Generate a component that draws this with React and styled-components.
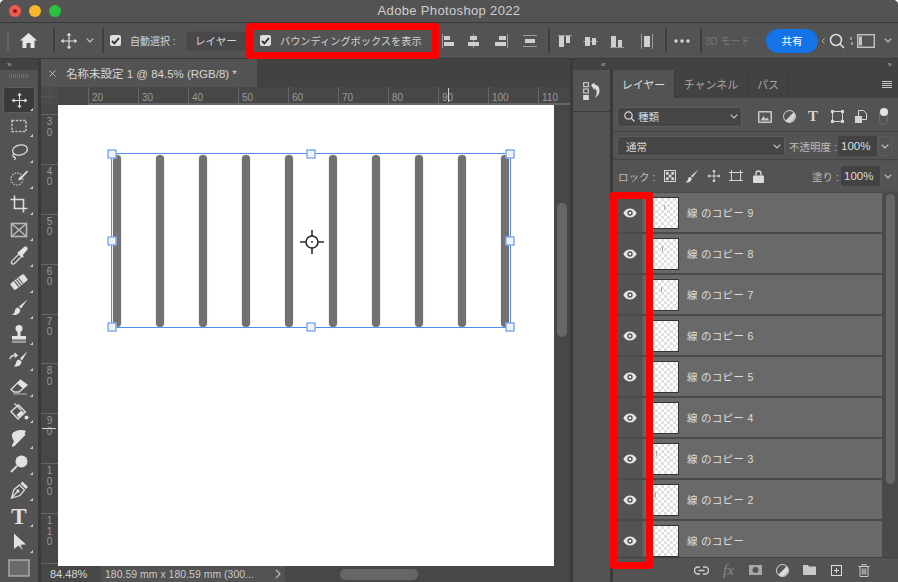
import React from 'react'
import styled, { createGlobalStyle } from 'styled-components'

const GlobalStyle = createGlobalStyle`
html, body {
  margin: 0;
  padding: 0;
  background: #ffffff;
}
* {
  box-sizing: border-box;
}
`

const Window = styled.div`
position: relative;
width: 898px;
height: 582px;
overflow: hidden;
display: flex;
flex-direction: column;
background: #3a3a3a;
border-radius: 5px 5px 0 0;
color: #d8d8d8;
font-family: "Liberation Sans", "Noto Sans CJK JP", sans-serif;
font-size: 10px;
`

const TitleBar = styled.header`
position: relative;
flex: 0 0 23px;
display: flex;
align-items: center;
justify-content: center;
background: #535353;
border-bottom: 1px solid #383838;
font-size: 13px;
color: #cfcfcf;
letter-spacing: 0.35px;
padding-bottom: 1px;
`

const Lights = styled.div`
position: absolute;
left: 9px;
top: 5px;
display: flex;
gap: 8px;
`

const Light = styled.span`
width: 12px;
height: 12px;
border-radius: 50%;
background: ${(props) => props.$color};
display: flex;
align-items: center;
justify-content: center;

&::after {
  content: "";
  width: 4px;
  height: 4px;
  border-radius: 50%;
  background: ${(props) => props.$dot || 'transparent'};
}
`

const OptionsBar = styled.div`
flex: 0 0 36px;
display: flex;
align-items: center;
background: #535353;
border-bottom: 1px solid #383838;
`

const Slot = styled.div`
flex: 0 0 ${(props) => props.$w}px;
margin-left: ${(props) => props.$ml || 0}px;
display: flex;
align-items: center;
justify-content: center;
`

const BarSep = styled.div`
flex: 0 0 2px;
height: 25px;
margin-left: ${(props) => props.$ml || 0}px;
background: #3e3e3e;
`

const Grip = styled.div`
width: 2px;
height: 22px;
margin-left: 3px;
background: repeating-linear-gradient(to bottom, #6e6e6e 0 1px, transparent 1px 2px);
`

const Check = styled.span`
flex: 0 0 11px;
width: 11px;
height: 11px;
margin-left: ${(props) => props.$ml || 0}px;
border-radius: 2px;
background: #dedede;
display: flex;
align-items: center;
justify-content: center;
`

const OptLabel = styled.span`
flex: 0 0 ${(props) => props.$w}px;
margin-left: ${(props) => props.$ml || 0}px;
color: ${(props) => props.$dim ? '#7a7a7a' : '#d4d4d4'};
font-size: ${(props) => props.$size || 10}px;
white-space: nowrap;
`

const ToolDropdown = styled.div`
flex: 0 0 61px;
height: 20px;
margin-left: 8px;
padding-left: 8px;
display: flex;
align-items: center;
border-radius: 3px;
background: #484848;
border: 1px solid #4d4d4d;
font-size: 10.5px;
color: #d8d8d8;
white-space: nowrap;
`

const ShareButton = styled.button`
flex: 0 0 52px;
height: 24px;
margin-left: 3px;
padding: 0;
border: 0;
border-radius: 12px;
background: #1473e6;
color: #ffffff;
font: inherit;
font-size: 10.5px;
`

const Workspace = styled.div`
flex: 1;
display: flex;
min-height: 0;
gap: 3px;
`

const ToolColumn = styled.nav`
flex: 0 0 38px;
display: flex;
flex-direction: column;
background: #535353;
`

const CollapseStrip = styled.div`
flex: 0 0 11px;
display: flex;
align-items: center;
justify-content: space-between;
padding: 0 7px;
background: #424242;
color: #b5b5b5;
font-size: 8px;
letter-spacing: -1px;
line-height: 1;
`

const GripRow = styled.div`
flex: 0 0 17px;
display: flex;
justify-content: center;
padding-top: 4px;

&::after {
  content: "";
  width: 20px;
  height: 4px;
  background: repeating-linear-gradient(to right, #6e6e6e 0 1px, transparent 1px 2px);
}
`

const ToolButton = styled.div`
position: relative;
flex: 0 0 26px;
margin: 0 3px;
display: flex;
align-items: center;
justify-content: center;
border-radius: 3px;
background: ${(props) => props.$active ? '#3a3a3a' : 'transparent'};
border: 1px solid ${(props) => props.$active ? '#5e5e5e' : 'transparent'};

&::after {
  content: "";
  position: absolute;
  right: 1px;
  bottom: 1px;
  display: ${(props) => props.$plain ? 'none' : 'block'};
  border-style: solid;
  border-width: 0 0 3px 3px;
  border-color: transparent transparent #d0d0d0 transparent;
}
`

const ToolType = styled.span`
font-family: "Liberation Serif", serif;
font-weight: 700;
font-size: ${(props) => props.$size || 21}px;
line-height: 1;
color: ${(props) => props.$color || '#e0e0e0'};
`

const DocArea = styled.main`
flex: 0 0 529px;
display: flex;
flex-direction: column;
min-width: 0;
`

const TabBar = styled.div`
flex: 0 0 28px;
display: flex;
background: #424242;
`

const DocTab = styled.div`
flex: 0 0 216px;
display: flex;
align-items: center;
gap: 10px;
padding-left: 8px;
background: #535353;
color: #d6d6d6;
font-size: 11.5px;
white-space: nowrap;
`

const RulerTop = styled.div`
position: relative;
flex: 0 0 18px;
display: flex;
background: #474747;
overflow: hidden;
`

const RulerCorner = styled.div`
flex: 0 0 17px;
background:
  linear-gradient(#535353, #535353) center / 100% 1px no-repeat,
  linear-gradient(#535353, #535353) center / 1px 100% no-repeat,
  #4b4b4b;
`

const RulerGap = styled.div`
flex: 0 0 30px;
`

const RulerCell = styled.div`
flex: 0 0 50px;
padding: 5px 0 0 3px;
border-left: 1px solid #666666;
color: #999999;
font-size: 10px;
line-height: 11px;
background: linear-gradient(#666666, #666666) left 0 bottom 0 / 1px 2px;
background-size: 10px 2px;
background-position: -1px bottom;
background-repeat: repeat-x;
`

const RulerMarkTop = styled.span`
position: absolute;
left: 407px;
top: 1px;
width: 1px;
height: 14px;
background: #d0d0d0;
`

const DocMiddle = styled.div`
flex: 1;
display: flex;
min-height: 0;
background: #474747;
`

const RulerLeft = styled.div`
position: relative;
flex: 0 0 17px;
padding-top: 9px;
background: #474747;
overflow: hidden;
`

const RulerRow = styled.div`
height: 49.9px;
padding: 2px 0 0 0;
border-top: 1px solid #666666;
display: flex;
flex-direction: column;
align-items: center;
color: #999999;
font-size: 10px;
line-height: 10.5px;
`

const RulerMarkLeft = styled.span`
position: absolute;
left: 1px;
top: 323px;
width: 14px;
height: 1px;
background: #d0d0d0;
`

const Paper = styled.div`
position: relative;
flex: 0 0 496px;
background: #ffffff;
`

const BoundingBox = styled.div`
position: absolute;
left: 53px;
top: 48px;
width: 400px;
height: 175px;
padding: 1px 1px 0;
display: flex;
justify-content: space-between;
border: 1px solid #4f8bf0;
`

const LineBar = styled.span`
width: 8px;
height: 172px;
border-radius: 4px;
background: #717171;
box-shadow: 0 0 1.5px #a8a8a8;
`

const Handle = styled.span`
position: absolute;
left: ${(props) => props.$x}%;
top: ${(props) => props.$y}%;
width: 9px;
height: 9px;
transform: translate(-50%, -50%);
background: #f2f2f2;
border: 1px solid #4f8bf0;
`

const Pivot = styled.svg`
position: absolute;
left: 242px;
top: 125px;
`

const VScrollTrack = styled.div`
flex: 0 0 16px;
padding: 98px 3px 0;
background: #474747;
`

const ScrollThumb = styled.div`
width: ${(props) => props.$w || '100%'};
height: ${(props) => props.$h};
margin-left: ${(props) => props.$ml || 0}px;
border-radius: 5px;
background: #666666;
`

const StatusBar = styled.footer`
flex: 0 0 16px;
display: flex;
align-items: center;
background: #474747;
font-size: 11px;
color: #d8d8d8;
white-space: nowrap;
`

const Zoom = styled.span`
flex: 0 0 60px;
padding-left: 9px;
`

const DocInfo = styled.div`
flex: 0 0 184px;
height: 16px;
display: flex;
align-items: center;
justify-content: space-between;
padding: 0 4px;
background: #535353;
color: #c8c8c8;
font-size: 10.5px;
`

const RightArea = styled.aside`
flex: 1;
display: flex;
flex-direction: column;
min-width: 0;
`

const RightBody = styled.div`
flex: 1;
display: flex;
gap: 3px;
min-height: 0;
`

const Dock = styled.div`
flex: 0 0 37px;
display: flex;
flex-direction: column;
background: #535353;
`

const DockItem = styled.div`
flex: 0 0 42px;
display: flex;
align-items: flex-start;
justify-content: center;
border-bottom: 1px solid #3a3a3a;
`

const LayersPanel = styled.section`
flex: 1;
display: flex;
flex-direction: column;
min-width: 0;
background: #535353;
`

const PanelTabs = styled.div`
flex: 0 0 28px;
display: flex;
align-items: stretch;
background: #424242;
`

const PanelTab = styled.div`
flex: 0 0 ${(props) => props.$w}px;
display: flex;
align-items: center;
justify-content: center;
background: ${(props) => props.$active ? '#535353' : 'transparent'};
border-right: 1px solid #383838;
color: ${(props) => props.$active ? '#dcdcdc' : '#a8a8a8'};
font-size: 11px;
`

const PanelMenu = styled.div`
margin-left: auto;
margin-right: 6px;
align-self: center;
width: 10px;
height: 7px;
background: repeating-linear-gradient(to bottom, #c8c8c8 0 1px, transparent 1px 2px);
`

const ControlRow = styled.div`
flex: 0 0 ${(props) => props.$h}px;
display: flex;
align-items: center;
padding: ${(props) => props.$pt || 0}px 0 0 4px;
border-bottom: ${(props) => props.$line ? '1px solid #444444' : '0'};
`

const Select = styled.div`
flex: 0 0 ${(props) => props.$w}px;
height: 20px;
display: flex;
align-items: center;
justify-content: space-between;
gap: 3px;
padding: 0 3px 0 ${(props) => props.$pl || 8}px;
border: 1px solid #5c5c5c;
border-radius: 3px;
background: #454545;
color: #d8d8d8;
font-size: 10.5px;
`

const SelectLabel = styled.span`
flex: 1;
`

const FilterToggle = styled.div`
flex: 0 0 9px;
height: 16px;
margin-left: 6px;
border-radius: 5px;
border: 1px solid #6d6d6d;
position: relative;

&::before {
  content: "";
  position: absolute;
  left: 0;
  top: -2px;
  width: 8px;
  height: 8px;
  border-radius: 50%;
  background: #e4e4e4;
}
`

const FieldLabel = styled.span`
flex: 0 0 ${(props) => props.$w}px;
margin-left: ${(props) => props.$ml || 0}px;
color: #bdbdbd;
font-size: 10.5px;
white-space: nowrap;
`

const Field = styled.div`
flex: 0 0 39px;
height: 20px;
margin-left: ${(props) => props.$ml || 0}px;
display: flex;
align-items: center;
padding-left: 3px;
border-radius: 3px 0 0 3px;
background: #424242;
color: #dddddd;
font-size: 11.5px;
`

const FieldArrow = styled.div`
flex: 0 0 14px;
height: 20px;
margin-left: 1px;
display: flex;
align-items: center;
justify-content: center;
border-radius: 0 3px 3px 0;
border: 1px solid #5c5c5c;
`

const ListWrap = styled.div`
flex: 1;
display: flex;
min-height: 0;
`

const LayerList = styled.div`
flex: 0 0 269px;
display: flex;
flex-direction: column;
gap: 2px;
padding: 1px 0 0 4px;
overflow: hidden;
background: #4a4a4a;
`

const LayerRow = styled.div`
flex: 0 0 39px;
display: flex;
align-items: center;
background: #696969;
`

const EyeCell = styled.div`
flex: 0 0 27px;
align-self: stretch;
display: flex;
align-items: center;
justify-content: center;
background: #535353;
border-right: 2px solid #5e5e5e;
`

const Thumb = styled.div`
position: relative;
flex: 0 0 27px;
height: 32px;
margin-left: 8px;
border-top: 1px solid #333333;
border-right: 1px solid #333333;
border-bottom: 1px solid #333333;
background: repeating-conic-gradient(#e0e0e0 0 25%, #ffffff 0 50%) 0 0 / 6px 6px;

&::after {
  content: "";
  position: absolute;
  left: ${(props) => props.$mark}px;
  top: 7px;
  width: 1px;
  height: ${(props) => props.$mark ? 5 : 0}px;
  background: #a8a8a8;
}
`

const LayerName = styled.span`
margin-left: 8px;
color: #dedede;
font-size: 10.5px;
letter-spacing: 0.3px;
white-space: nowrap;
`

const ListScroll = styled.div`
flex: 1;
padding: 2px 3px 0 4px;
background: #4a4a4a;
`

const PanelFooter = styled.div`
flex: 0 0 25px;
display: flex;
align-items: center;
padding-left: 75px;
gap: 0;
border-top: 1px solid #404040;
background: #535353;
`

const FooterSlot = styled.div`
flex: 0 0 ${(props) => props.$w || 27}px;
display: flex;
align-items: center;
justify-content: center;
`

const FxMark = styled.span`
font-family: "Liberation Serif", serif;
font-style: italic;
font-size: 15px;
color: #8a8a8a;
`

// red annotation frames painted over the screenshot
const RedFrame = styled.div`
position: absolute;
left: ${(props) => props.$x}px;
top: ${(props) => props.$y}px;
width: ${(props) => props.$w}px;
height: ${(props) => props.$h}px;
border: 7px solid #ff0000;
border-radius: 3px;
pointer-events: none;
`

const Ico = ({ children, w = 20, h = 20, vb = '0 0 20 20' }) => (
  <svg width={w} height={h} viewBox={vb} fill="none" stroke="#dcdcdc" strokeWidth="1.3">{children}</svg>
)

const Chevron = ({ color = '#c8c8c8' }) => (
  <svg width="8" height="5" viewBox="0 0 8 5" fill="none" stroke={color} strokeWidth="1.1"><path d="M0.7 0.7 4 4 7.3 0.7" /></svg>
)

const MoveIcon = ({ size = 18 }) => (
  <svg width={size} height={size} viewBox="0 0 20 20" fill="#e2e2e2" stroke="#e2e2e2" strokeWidth="1.2">
    <path d="M10 2v16M2 10h16" />
    <path d="M10 0.8 12.6 4H7.4ZM10 19.2 7.4 16h5.2ZM0.8 10 4 7.4v5.2ZM19.2 10 16 12.6V7.4Z" stroke="none" />
  </svg>
)

const CheckMark = () => (
  <svg width="9" height="8" viewBox="0 0 9 8" fill="none" stroke="#2d2d2d" strokeWidth="1.8"><path d="M1 4 3.4 6.4 8 1" /></svg>
)

const AlignIcon = ({ rects, line }) => (
  <svg width="18" height="16" viewBox="0 0 18 16" fill="#cfcfcf">
    {line.map((d) => <rect key={d.join()} x={d[0]} y={d[1]} width={d[2]} height={d[3]} fill="#9c9c9c" />)}
    {rects.map((d) => <rect key={d.join()} x={d[0]} y={d[1]} width={d[2]} height={d[3]} />)}
  </svg>
)

const TOOLS = [
  { key: 'move', active: true, node: <MoveIcon size={17} /> },
  { key: 'marquee', node: <Ico><rect x="3" y="4.5" width="14" height="11" strokeDasharray="2.4 1.3" stroke="#c4c4c4" strokeWidth="1.5" /></Ico> },
  { key: 'lasso', node: <Ico><ellipse cx="11" cy="8" rx="7.5" ry="5" transform="rotate(-12 11 8)" /><path d="M5 12c-1.6 1-1.5 3 .2 3 1.4 0 1.3 2 .3 3" /></Ico> },
  { key: 'quick', node: <Ico><circle cx="8" cy="11" r="6" strokeDasharray="1.5 1.3" stroke="#bdbdbd" /><path d="M18 2.5 12 8.5c-1.6.3-2.6 1.6-2.6 3.8 2.3 0 3.6-1 4-2.6L19 3.8Z" fill="#e2e2e2" stroke="none" /></Ico> },
  { key: 'crop', node: <Ico><path d="M1.5 5.5H14.5V18.5M5.5 1.5V14.5H18.5" strokeWidth="1.6" /></Ico> },
  { key: 'frame', node: <Ico><rect x="2.5" y="3.5" width="15" height="13" stroke="#b8b8b8" strokeWidth="1.6" /><path d="M2.5 3.5 17.5 16.5M17.5 3.5 2.5 16.5" stroke="#b8b8b8" strokeWidth="1.6" /></Ico> },
  { key: 'dropper', node: <Ico><path d="M3 17.5c-.9-.9-.6-2 0-2.6L10 8l2.5 2.5-7 7c-.7.6-1.7.9-2.5 0Z" /><path d="M10.2 5.3 15 .9c1-.8 2.5-.5 3.2.4.7 1 .6 2.2-.2 3l-4.200 4.800 1 1.400-1.500 1.300-5-5 1.400-1.400Z" fill="#e2e2e2" stroke="none" /></Ico> },
  { key: 'heal', node: <Ico><g transform="rotate(-38 10 10)"><rect x="1.500" y="6" width="17" height="8" rx="1.500" fill="#e0e0e0" stroke="none" /><path d="M7 6.500v7M9.500 6.500v7M12 6.500v7" stroke="#555555" strokeWidth="1.100" /></g></Ico> },
  { key: 'brush', node: <Ico><path d="M18.500 1.500 10 8.500 12 10.500ZM9 9.500c-2.500.4-3 2.200-3.200 3.800-.2 1.400-1 2.600-2.800 3.400 3.500 1 8-.3 8.300-5Z" fill="#e2e2e2" stroke="none" /></Ico> },
  { key: 'stamp', node: <Ico><circle cx="10" cy="4.500" r="3.500" fill="#e2e2e2" stroke="none" /><path d="M8.500 7h3v5h-3ZM3 12h14v3.500H3Z" fill="#e2e2e2" stroke="none" /><rect x="3" y="16.500" width="14" height="2.500" fill="#9a9a9a" stroke="none" /></Ico> },
  { key: 'history', node: <Ico><path d="M18.500 1 11 8.500 13 10.500ZM10 9.500c-2.500.4-2.500 2-3 3.500-.3 1.300-1 2.400-2 3.400 3 .5 7.500-.6 7.500-4.900Z" fill="#e2e2e2" stroke="none" /><path d="M1 9c.8-2.800 3.200-4 6-3.600M5.500 3 8 5.500 5.500 7.500" strokeWidth="1.500" /></Ico> },
  { key: 'eraser', node: <Ico><path d="M2 13.500 11.500 4l6.500 5-8 7H5Z" /><path d="M8 7.500 11.500 4l6.500 5-4 3.500Z" fill="#e2e2e2" stroke="none" /><path d="M4 18h14" strokeWidth="1.200" stroke="#a8a8a8" /></Ico> },
  { key: 'bucket', node: <Ico><path d="M2 9.500 9.500 3l7 7-7.500 7Z" strokeWidth="1.400" /><path d="M5.500 1.500 12 8" /><path d="M12.500 8.500 15 10.500l-5 5-2.500-2.500Z" fill="#e2e2e2" stroke="none" /><circle cx="17.500" cy="15.500" r="2" fill="#e2e2e2" stroke="none" /></Ico> },
  { key: 'smudge', node: <Ico><path d="M3 6c2-3.500 9-5 13-3.500 1.500.8.500 2.500-1 2.500 1.500.5 2 2 .5 2.800L10 13.500 5 18.500H2.500L5 13c-1.500-2-2.500-4.500-2-7Z" fill="#e2e2e2" stroke="none" /></Ico> },
  { key: 'dodge', node: <Ico><circle cx="12.500" cy="7.500" r="6" fill="#e2e2e2" stroke="none" /><path d="M8 12 2 18" strokeWidth="1.800" /></Ico> },
  { key: 'pen', node: <Ico><path d="M2.500 18 5 9.500 10.500 5l5 5-4.500 5.500Z" /><path d="M2.500 18 8.500 11.500" /><circle cx="9" cy="11" r="1" fill="#dcdcdc" /><path d="M11.500 3.500 13.500 1.500l5.500 5.500-2 2Z" fill="#e2e2e2" stroke="none" /></Ico> },
  { key: 'type', node: <ToolType $size={23}>T</ToolType> },
  { key: 'select', node: <Ico><path d="M5 1.500 17 12.500 11.500 12.800 14 18.500l-4.500-5L5 17Z" fill="#e2e2e2" stroke="none" /></Ico> },
  { key: 'rect', plain: true, node: <Ico w={22} h={18} vb="0 0 22 18"><rect x="1" y="1" width="20" height="16" fill="#6a6a6a" stroke="#b4b4b4" strokeWidth="1.300" /></Ico> },
]

const TOP_TICKS = [20, 30, 40, 50, 60, 70, 80, 90, 100, 110]
const LEFT_TICKS = [30, 40, 50, 60, 70, 80, 90, 100, 110]
const BARS = Array.from({ length: 10 }, (_, i) => i)
const HANDLES = [[0, 0], [50, 0], [100, 0], [0, 50], [100, 50], [0, 100], [50, 100], [100, 100]]

const LAYERS = [
  { name: '線 のコピー 9', mark: 12 },
  { name: '線 のコピー 8', mark: 10 },
  { name: '線 のコピー 7', mark: 9 },
  { name: '線 のコピー 6', mark: 0 },
  { name: '線 のコピー 5', mark: 0 },
  { name: '線 のコピー 4', mark: 0 },
  { name: '線 のコピー 3', mark: 4 },
  { name: '線 のコピー 2', mark: 3 },
  { name: '線 のコピー', mark: 0 },
]

const Eye = () => (
  <svg width="14" height="10" viewBox="0 0 14 10">
    <path d="M0.300 5C2 1.800 4.400 .4 7 .4s5 1.400 6.700 4.600C12 8.200 9.600 9.600 7 9.600S2 8.200 .3 5Z" fill="#e6e6e6" />
    <circle cx="7" cy="5" r="2.700" fill="#535353" />
    <circle cx="7" cy="5" r="1.300" fill="#e6e6e6" />
  </svg>
)

export default function App() {
  return (
    <Window>
      <GlobalStyle />
      <TitleBar>
        <Lights>
          <Light $color="#ee5a52" $dot="#8a1f1a" />
          <Light $color="#f5b82e" />
          <Light $color="#29c13f" />
        </Lights>
        Adobe Photoshop 2022
      </TitleBar>

      <OptionsBar>
        <Slot $w={12}><Grip /></Slot>
        <Slot $w={32}>
          <svg width="17" height="15" viewBox="0 0 17 15" fill="#e6e6e6"><path d="M8.500 0 17 7.500h-2.500V15h-4v-5h-4v5h-4V7.500H0Z" /></svg>
        </Slot>
        <BarSep $ml={9} />
        <Slot $w={28}><MoveIcon /></Slot>
        <Slot $w={14}><Chevron /></Slot>
        <BarSep $ml={5} />
        <Check $ml={6}><CheckMark /></Check>
        <OptLabel $w={48} $ml={9}>自動選択 :</OptLabel>
        <ToolDropdown>レイヤー</ToolDropdown>
        <Check $ml={13}><CheckMark /></Check>
        <OptLabel $w={142} $ml={9} $size={10.2}>バウンディングボックスを表示</OptLabel>
        <Slot $w={24} $ml={15}><AlignIcon line={[[2, 1, 1, 14]]} rects={[[4, 3, 6, 4], [4, 9, 10, 4]]} /></Slot>
        <Slot $w={24} $ml={1}><AlignIcon line={[[8, 1, 1, 14]]} rects={[[5, 3, 7, 4], [3, 9, 11, 4]]} /></Slot>
        <Slot $w={24} $ml={3}><AlignIcon line={[[15, 1, 1, 14]]} rects={[[7, 3, 7, 4], [3, 9, 11, 4]]} /></Slot>
        <Slot $w={24} $ml={5}><AlignIcon line={[[2, 2, 14, 1], [2, 13, 14, 1]]} rects={[[4, 6, 10, 4]]} /></Slot>
        <BarSep $ml={6} />
        <Slot $w={24} $ml={3}><AlignIcon line={[[2, 2, 14, 1]]} rects={[[3, 3, 5, 11], [10, 3, 4, 7]]} /></Slot>
        <Slot $w={24} $ml={2}><AlignIcon line={[[1, 8, 15, 1]]} rects={[[3, 4, 5, 9], [10, 5, 4, 7]]} /></Slot>
        <Slot $w={24} $ml={2}><AlignIcon line={[[2, 14, 14, 1]]} rects={[[3, 3, 5, 11], [10, 7, 4, 7]]} /></Slot>
        <Slot $w={24} $ml={6}><AlignIcon line={[[3, 1, 1, 15], [14, 1, 1, 15]]} rects={[[6, 3, 6, 11]]} /></Slot>
        <BarSep $ml={6} />
        <Slot $w={24} $ml={3}>
          <svg width="16" height="4" viewBox="0 0 16 4" fill="#d6d6d6"><circle cx="2" cy="2" r="1.700" /><circle cx="8" cy="2" r="1.700" /><circle cx="14" cy="2" r="1.700" /></svg>
        </Slot>
        <BarSep $ml={6} />
        <OptLabel $w={58} $ml={3} $dim>3D モード :</OptLabel>
        <ShareButton>共有</ShareButton>
        <Slot $w={10}><svg width="4" height="6" viewBox="0 0 4 6" fill="none" stroke="#b0b0b0"><path d="M3.500 .5 1 3l2.500 2.500" /></svg></Slot>
        <Slot $w={18}>
          <svg width="16" height="16" viewBox="0 0 16 16" fill="none" stroke="#e0e0e0" strokeWidth="1.500"><circle cx="7" cy="7" r="5.500" /><path d="M11 11 15 15" /></svg>
        </Slot>
        <Slot $w={10}><svg width="4" height="8" viewBox="0 0 4 8" fill="#9a9a9a"><rect x="1" y="0" width="2" height="3" /><rect x="2" y="5" width="2" height="3" /></svg></Slot>
        <Slot $w={18} $ml={1}>
          <svg width="18" height="14" viewBox="0 0 18 14" fill="none" stroke="#c4c4c4" strokeWidth="1.400"><rect x=".7" y=".7" width="16.600" height="12.600" /><rect x="2" y="2.500" width="3" height="9" fill="#c4c4c4" stroke="none" /></svg>
        </Slot>
        <Slot $w={16} $ml={5}><Chevron /></Slot>
      </OptionsBar>

      <Workspace>
        <ToolColumn>
          <CollapseStrip><span>››</span></CollapseStrip>
          <GripRow />
          {TOOLS.map((tool) => (
            <ToolButton key={tool.key} $active={tool.active} $plain={tool.plain}>{tool.node}</ToolButton>
          ))}
        </ToolColumn>

        <DocArea>
          <TabBar>
            <DocTab>
              <svg width="7" height="7" viewBox="0 0 7 7" stroke="#b8b8b8"><path d="M.5 .5 6.500 6.500M6.500 .5 .5 6.500" /></svg>
              名称未設定 1 @ 84.5% (RGB/8) *
            </DocTab>
          </TabBar>
          <RulerTop>
            <RulerCorner />
            <RulerGap />
            {TOP_TICKS.map((n) => <RulerCell key={n}>{n}</RulerCell>)}
            <RulerMarkTop />
          </RulerTop>
          <DocMiddle>
            <RulerLeft>
              {LEFT_TICKS.map((n) => (
                <RulerRow key={n}>
                  {String(n).split('').map((d, i) => <span key={`${n}-${i}`}>{d}</span>)}
                </RulerRow>
              ))}
              <RulerRow />
              <RulerMarkLeft />
            </RulerLeft>
            <Paper>
              <BoundingBox>
                {BARS.map((b) => <LineBar key={b} />)}
                {HANDLES.map(([x, y]) => <Handle key={`${x}-${y}`} $x={x} $y={y} />)}
              </BoundingBox>
              <Pivot width="24" height="24" viewBox="0 0 24 24" fill="none" stroke="#2b2b2b" strokeWidth="1.600">
                <circle cx="12" cy="12" r="6" />
                <path d="M12 0v6M12 18v6M0 12h6M18 12h6" />
                <circle cx="12" cy="12" r="1" fill="#2b2b2b" stroke="none" />
              </Pivot>
            </Paper>
            <VScrollTrack><ScrollThumb $h="134px" /></VScrollTrack>
          </DocMiddle>
          <StatusBar>
            <Zoom>84.48%</Zoom>
            <DocInfo>
              180.59 mm x 180.59 mm (300...
              <svg width="6" height="10" viewBox="0 0 6 10" fill="none" stroke="#c8c8c8" strokeWidth="1.100"><path d="M1 .8 5 5 1 9.200" /></svg>
            </DocInfo>
            <ScrollThumb $w="78px" $h="11px" $ml={55} />
          </StatusBar>
        </DocArea>

        <RightArea>
          <CollapseStrip>
            <span style={{ marginLeft: 21 }}>‹‹</span>
            <span>››</span>
          </CollapseStrip>
          <RightBody>
            <Dock>
              <DockItem>
                <svg width="17" height="18" viewBox="0 0 17 18" fill="#dcdcdc" style={{ marginTop: 12 }}>
                  <rect x=".7" y=".7" width="4.600" height="4" fill="none" stroke="#dcdcdc" />
                  <rect x=".7" y="7" width="4.600" height="4" fill="none" stroke="#dcdcdc" />
                  <rect x=".2" y="13" width="5.600" height="5" />
                  <path d="M8 3 11.500 .5V2.500c3.500.3 5 3 5 6 0 3-1.500 5.500-4.500 7.500 1.500-2.500 2-5 1.500-7-.3-1.500-1-2.500-2-2.800V8.500Z" />
                </svg>
              </DockItem>
            </Dock>
            <LayersPanel>
              <PanelTabs>
                <PanelTab $w={62} $active>レイヤー</PanelTab>
                <PanelTab $w={73}>チャンネル</PanelTab>
                <PanelTab $w={41}>パス</PanelTab>
                <PanelMenu />
              </PanelTabs>
              <ControlRow $h={34} $pt={4} $line>
                <Select $w={125} $pl={6}>
                  <svg width="11" height="11" viewBox="0 0 11 11" fill="none" stroke="#d8d8d8" strokeWidth="1.200"><circle cx="4.500" cy="4.500" r="3.700" /><path d="M7.200 7.200 10.500 10.500" /></svg>
                  <SelectLabel>種類</SelectLabel>
                  <Chevron />
                </Select>
                <Slot $w={24} $ml={11}>
                  <svg width="14" height="12" viewBox="0 0 14 12"><rect width="14" height="12" rx="1" fill="#c8c8c8" /><rect x="1.500" y="1.500" width="11" height="9" fill="#555555" /><path d="M2.500 9.500 5.500 5l2 3 1.500-1.500 2.500 3Z" fill="#c8c8c8" /></svg>
                </Slot>
                <Slot $w={24}>
                  <svg width="13" height="13" viewBox="0 0 13 13"><circle cx="6.500" cy="6.500" r="6" fill="#555555" stroke="#d4d4d4" /><path d="M10.700 2.300A6 6 0 0 1 2.300 10.700Z" fill="#d4d4d4" /></svg>
                </Slot>
                <Slot $w={24}><ToolType $size={15} $color="#d4d4d4">T</ToolType></Slot>
                <Slot $w={24}>
                  <svg width="13" height="13" viewBox="0 0 13 13" fill="#d4d4d4"><rect x="1.500" y="1.500" width="10" height="10" fill="none" stroke="#d4d4d4" /><rect width="3" height="3" /><rect x="10" width="3" height="3" /><rect y="10" width="3" height="3" /><rect x="10" y="10" width="3" height="3" /></svg>
                </Slot>
                <Slot $w={24}>
                  <svg width="12" height="13" viewBox="0 0 12 13"><path d="M3.500 .5h5l3 3v6h-8Z" fill="none" stroke="#d4d4d4" /><rect y="6" width="7" height="7" fill="#d4d4d4" /></svg>
                </Slot>
                <FilterToggle />
              </ControlRow>
              <ControlRow $h={28} $pt={1} $line>
                <Select $w={168}><SelectLabel>通常</SelectLabel><Chevron /></Select>
                <FieldLabel $w={49} $ml={4}>不透明度 :</FieldLabel>
                <Field>100%</Field>
                <FieldArrow><Chevron /></FieldArrow>
              </ControlRow>
              <ControlRow $h={32}>
                <FieldLabel $w={38} $ml={1}>ロック :</FieldLabel>
                <Slot $w={22} $ml={3}>
                  <svg width="12" height="12" viewBox="0 0 12 12" fill="#d8d8d8"><rect x=".5" y=".5" width="11" height="11" fill="#555555" stroke="#d8d8d8" /><rect x="2" y="2" width="2.700" height="2.700" /><rect x="7.300" y="2" width="2.700" height="2.700" /><rect x="4.700" y="4.700" width="2.700" height="2.700" /><rect x="2" y="7.300" width="2.700" height="2.700" /><rect x="7.300" y="7.300" width="2.700" height="2.700" /></svg>
                </Slot>
                <Slot $w={22}>
                  <svg width="14" height="14" viewBox="0 0 14 14" fill="#dcdcdc"><path d="M13.500 .5 6 7 7.500 8.500ZM5.200 7.700C3.500 8 3 9.500 2.800 10.800 2.600 12 1.800 12.800.5 13.200c2.700.7 6-.2 6.300-3.800Z" /></svg>
                </Slot>
                <Slot $w={22}><MoveIcon size={14} /></Slot>
                <Slot $w={22}>
                  <svg width="14" height="13" viewBox="0 0 14 13" fill="none" stroke="#d4d4d4"><rect x="2.500" y="2.500" width="9" height="8" /><path d="M0 2.500h3M2.500 0v3M11 2.500h3M11.500 0v3M0 10.500h3M11 10.500h3" /></svg>
                </Slot>
                <Slot $w={22}>
                  <svg width="11" height="13" viewBox="0 0 11 13" fill="#dcdcdc"><path d="M3 5.500V3.500a2.500 2.500 0 0 1 5 0v2" fill="none" stroke="#dcdcdc" strokeWidth="1.300" /><rect y="5.500" width="11" height="7.500" rx="1" /></svg>
                </Slot>
                <FieldLabel $w={27} $ml={43}>塗り :</FieldLabel>
                <Field $ml={2}>100%</Field>
                <FieldArrow><Chevron /></FieldArrow>
              </ControlRow>
              <ListWrap>
                <LayerList>
                  {LAYERS.map((layer) => (
                    <LayerRow key={layer.name}>
                      <EyeCell><Eye /></EyeCell>
                      <Thumb $mark={layer.mark} />
                      <LayerName>{layer.name}</LayerName>
                    </LayerRow>
                  ))}
                </LayerList>
                <ListScroll><ScrollThumb $h="290px" /></ListScroll>
              </ListWrap>
              <PanelFooter>
                <FooterSlot>
                  <svg width="15" height="9" viewBox="0 0 15 9" fill="none" stroke="#d0d0d0" strokeWidth="1.300"><path d="M6 1H4a3.500 3.500 0 0 0 0 7h2M9 1h2a3.500 3.500 0 0 1 0 7H9M4.500 4.500h6" /></svg>
                </FooterSlot>
                <FooterSlot><FxMark>fx</FxMark></FooterSlot>
                <FooterSlot>
                  <svg width="13" height="10" viewBox="0 0 13 10"><rect width="13" height="10" fill="#a8a8a8" /><circle cx="6.500" cy="5" r="3" fill="#555555" /></svg>
                </FooterSlot>
                <FooterSlot>
                  <svg width="13" height="13" viewBox="0 0 13 13"><circle cx="6.500" cy="6.500" r="6" fill="#555555" stroke="#dcdcdc" /><path d="M10.700 2.300A6 6 0 0 1 2.300 10.700Z" fill="#dcdcdc" /></svg>
                </FooterSlot>
                <FooterSlot>
                  <svg width="13" height="10" viewBox="0 0 13 10" fill="#c8c8c8"><path d="M0 0h5l1 1.500h7V10H0Z" /></svg>
                </FooterSlot>
                <FooterSlot>
                  <svg width="11" height="11" viewBox="0 0 11 11" fill="none" stroke="#dcdcdc"><rect x=".5" y=".5" width="10" height="10" /><path d="M5.500 3v5M3 5.500h5" /></svg>
                </FooterSlot>
                <FooterSlot>
                  <svg width="12" height="13" viewBox="0 0 12 13" fill="none" stroke="#c8c8c8"><path d="M.5 2.500h11M4 2.500V.7h4v1.800M2 2.500v10h8v-10M4.300 4.500v6M6 4.500v6M7.700 4.500v6" /></svg>
                </FooterSlot>
              </PanelFooter>
            </LayersPanel>
          </RightBody>
        </RightArea>
      </Workspace>

      <RedFrame $x={246} $y={23} $w={193} $h={36} />
      <RedFrame $x={610} $y={192} $w={43} $h={377} />
    </Window>
  )
}
